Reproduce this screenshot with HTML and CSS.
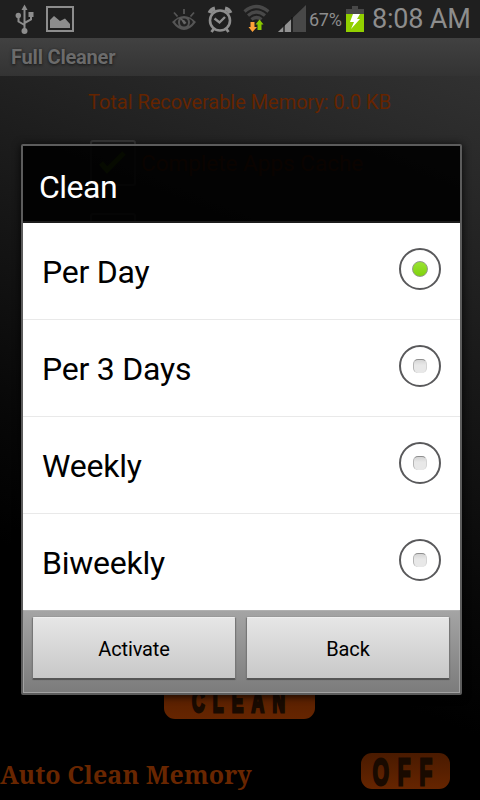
FILE: index.html
```html
<!DOCTYPE html>
<html lang="en">
<head>
<meta charset="utf-8">
<title>Full Cleaner</title>
<link rel="stylesheet" href="styles.css">
</head>
<body>
<div class="screen">
  <header class="status">
    <svg class="status-icons" width="308" height="38" viewBox="0 0 308 38">
      <g stroke="#8d8d8d" stroke-width="2" fill="none">
        <path d="M24.5 8V30M24.5 25L18.5 21.5V16M24.5 23L31 19.500V14"/>
        <rect x="47" y="7" width="26" height="24"/>
      </g>
      <g fill="#8d8d8d">
        <path d="M24.500 4.500L27.500 10H21.500Z"/>
        <circle cx="24.500" cy="31" r="3"/>
        <circle cx="18.300" cy="15.500" r="2.700"/>
        <rect x="28.500" y="12" width="5" height="5"/>
        <path d="M50 28V20L54 16L60 21L65 18.500L70 24V28Z"/>
      </g>
      <path d="M172 22Q184 10 196 22Q184 38 172 22Z" fill="#555"/>
      <path d="M184 9V14M174 12.500L177.500 16.500M194 12.500L190.500 16.500" stroke="#555" stroke-width="1.800"/>
      <path d="M175 22Q176 19.500 179 18.500Q177 22 179 26Q176 24.500 175 22ZM193 22Q192 19.500 189 18.500Q191 22 189 26Q192 24.500 193 22Z" fill="#222"/>
      <circle cx="184" cy="22.500" r="4" fill="#222"/>
      <path d="M180 18L184.500 20.500L186.500 23L184 24.500Z" fill="#666"/>
      <g stroke="#8d8d8d" fill="none">
        <circle cx="220" cy="20.500" r="10" stroke-width="2.600"/>
        <path d="M214.500 18.500L219.500 22.500L225 17" stroke-width="2.400"/>
        <path d="M214 28.500L211.500 32M226 28.500L228.500 32" stroke-width="2.800"/>
        <path d="M209.500 13Q211 9.500 215 8.500M225 8.500Q229 9.500 230.500 13" stroke-width="4"/>
      </g>
      <g stroke="#484848" stroke-width="3.200" fill="none">
        <path d="M244.500 11.500Q256 1.500 268.500 11.500M248 15.500Q256.500 8.500 265 15.500M251.500 19.500Q256.500 15.500 261.500 19.500"/>
      </g>
      <path d="M250.500 22H254.500V27H257L252.500 32L248.500 27H250.500Z" fill="#ffa238"/>
      <path d="M257.500 30V24.500H255.500L259.500 19.500L263.500 24.500H261.500V30Z" fill="#8ac800"/>
      <path d="M278 32L306 5V32Z" fill="#484848"/>
      <path d="M278 32L291 19.500V32Z" fill="#929292"/>
      <path d="M284 24V32M292 17V32" stroke="#111" stroke-width="1.300"/>
    </svg>
    <span class="percent">67%</span>
    <svg class="battery" width="18" height="26" viewBox="0 0 18 26">
      <path d="M6 0H12V3H18V26H0V3H6Z" fill="#484848"/>
      <path d="M0 8H18V26H0Z" fill="#92d000"/>
      <path d="M7 8H14L11 13H14L5 23L8 16H4Z" fill="#fff"/>
    </svg>
    <span class="clock">8:08 AM</span>
  </header>
  <div class="titlebar"><span class="app-name">Full Cleaner</span></div>
  <main class="page">
    <div class="total"><span>Total Recoverable Memory: 0.0 KB</span></div>
    <div class="option">
      <span class="check"><svg width="28" height="24" viewBox="0 0 28 24"><path d="M2 12L8 19L25 2" fill="none" stroke="#3e6a04" stroke-width="5"/></svg></span>
      <span class="option-name">Complete Apps Cache</span>
    </div>
    <div class="option"><span class="check"></span></div>
    <div class="clean-row">
      <svg class="pill" width="151" height="50" viewBox="0 0 151 50">
        <text x="50" y="43.500" textLength="166" lengthAdjust="spacing" transform="scale(.56 1)">CLEAN</text>
      </svg>
    </div>
    <div class="auto-row">
      <span class="auto-name">Auto Clean Memory</span>
      <svg class="pill off" width="89" height="36" viewBox="0 0 89 36">
        <text x="21" y="31.500" textLength="106" lengthAdjust="spacing" transform="scale(.56 1)">OFF</text>
      </svg>
    </div>
  </main>

  <section class="dialog">
    <h1 class="heading"><span>Clean</span></h1>
    <div class="choices">
      <div class="choice"><span>Per Day</span><i class="radio on"></i></div>
      <div class="choice"><span>Per 3 Days</span><i class="radio"></i></div>
      <div class="choice"><span>Weekly</span><i class="radio"></i></div>
      <div class="choice"><span>Biweekly</span><i class="radio"></i></div>
    </div>
    <div class="actions">
      <button class="action">Activate</button>
      <button class="action">Back</button>
    </div>
  </section>
</div>
</body>
</html>
```

FILE: styles.css
```css
*, *::after { box-sizing: border-box; }
body { margin: 0; background: #000; font-family: Roboto, "Liberation Sans", sans-serif; }
.screen {
  position: relative;
  width: 480px;
  height: 800px;
  overflow: hidden;
  display: flex;
  flex-direction: column;
}
.status { height: 38px; flex: none; display: flex; background: #1f1f1f; color: #8d8d8d; }
.status-icons { flex: none; }
.percent { width: 38px; padding-left: 1px; font-size: 18px; line-height: 40px; letter-spacing: -.3px; }
.battery { margin-top: 6px; flex: none; }
.clock { margin-left: 8px; font-size: 27px; line-height: 38px; letter-spacing: -.2px; white-space: nowrap; }
.titlebar {
  height: 38px;
  flex: none;
  padding-left: 11px;
  background: linear-gradient(#414141, #333);
  color: #6b6b6b;
  font-size: 20px;
  font-weight: 700;
  letter-spacing: -.2px;
  line-height: 38px;
  text-shadow: 0 1px 3px #111;
}
.page {
  flex: 1;
  overflow: hidden;
  background: linear-gradient(202deg, #313131 0, #222 20%, #161616 36%, #070707 58%, #000 72%);
}
.total { height: 64px; padding-left: 88px; color: #652400; font-size: 20px; line-height: 52px; letter-spacing: -.04px; white-space: nowrap; }
.option { height: 73px; padding-left: 90px; display: flex; gap: 5px; align-items: flex-start; color: #652400; }
.check {
  width: 46px;
  height: 46px;
  border: 2px solid #3a3a3a;
  border-radius: 3px;
  display: flex;
  align-items: center;
  justify-content: center;
}
.option-name { font-size: 22.5px; line-height: 46px; white-space: nowrap; }
.clean-row { height: 84px; padding-left: 164px; margin-top: 383px; }
.pill {
  display: block;
  background: linear-gradient(#491a00, #662500);
  border-radius: 11px;
  fill: #190a00;
  stroke: #190a00;
  stroke-width: 3px;
  font: 700 31px "Liberation Sans", sans-serif;
}
.auto-row { height: 40px; display: flex; justify-content: space-between; padding-right: 30px; }
.auto-name {
  color: #692600;
  font-family: "Noto Serif", "Droid Serif", "DejaVu Serif Condensed", "DejaVu Serif", serif;
  font-size: 25px;
  font-weight: 700;
  letter-spacing: .07px;
  line-height: 42px;
  white-space: nowrap;
}
.off { font-size: 37px; }

.dialog {
  position: absolute;
  left: 21px;
  top: 144px;
  width: 441px;
  height: 551px;
  border: 2px solid #5c5c5c;
  border-radius: 2px;
  display: flex;
  flex-direction: column;
  box-shadow: 0 1px 9px rgba(0, 0, 0, .85);
}
.heading {
  height: 77px;
  flex: none;
  margin: 0;
  padding: 3px 0 0 16px;
  background: rgba(0, 0, 0, .9);
  border-bottom: 2px solid #1c1c1c;
  color: #fff;
  font-size: 32px;
  font-weight: 400;
  letter-spacing: -.5px;
  line-height: 76px;
}
.choices { background: #fff; }
.choice {
  height: 97px;
  padding: 0 19px;
  display: flex;
  align-items: center;
  justify-content: space-between;
  border-bottom: 1px solid #e9e9e9;
  color: #000;
  font-size: 32px;
  letter-spacing: -.23px;
}
.choice:last-child { height: 96px; border: 0; }
.choice span { padding-top: 2px; }
.radio {
  width: 42px;
  height: 42px;
  margin-bottom: 4px;
  border: 2px solid #59595b;
  border-radius: 50%;
  display: grid;
  place-items: center;
}
.radio::after {
  content: "";
  width: 14px;
  height: 14px;
  border-radius: 5px;
  border-top: 1px solid #8e8e8e;
  border-left: 1px solid #b5b5b5;
  border-right: 1px solid #d4d4d4;
  background: linear-gradient(#d5d5d5, #e8e8e8 40%);
}
.radio.on::after {
  width: 16px;
  height: 16px;
  border: 1px solid #929b88;
  border-radius: 50%;
  background: linear-gradient(#99e334, #80d20d);
}
.actions {
  flex: 1;
  display: flex;
  gap: 10px;
  padding: 6px 9px 12px 8px;
  border: 1px solid #a2a2a2;
  border-top-color: #b0b0b0;
  background: linear-gradient(#a4a4a4, #7c7c7c);
}
.action {
  flex: 1;
  height: 63px;
  padding: 2px 0 0;
  border: 1px solid #777;
  border-top-color: #eee;
  border-bottom: 2px solid #555;
  border-radius: 2px;
  background: linear-gradient(#e6e6e6, #c8c8c8);
  box-shadow: 0 0 1px #555;
  color: #000;
  font: 20px Roboto, "Liberation Sans", sans-serif;
  letter-spacing: -.15px;
}
```
